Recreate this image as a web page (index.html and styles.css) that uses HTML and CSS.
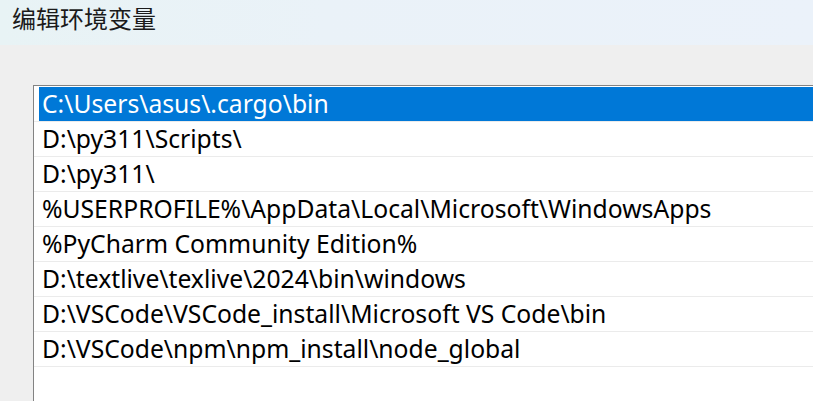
FILE: index.html
```html
<!DOCTYPE html>
<html lang="zh-CN">
<head>
<meta charset="utf-8">
<title>编辑环境变量</title>
<link rel="stylesheet" href="styles.css">
</head>
<body>
<div class="window">
  <header class="titlebar">
    <span class="title">编辑环境变量</span>
  </header>
  <main class="content">
    <div class="listbox">
      <div class="row selected"><span class="label">C:\Users\asus\.cargo\bin</span></div>
      <div class="row"><span class="label">D:\py311\Scripts\</span></div>
      <div class="row"><span class="label">D:\py311\</span></div>
      <div class="row"><span class="label">%USERPROFILE%\AppData\Local\Microsoft\WindowsApps</span></div>
      <div class="row"><span class="label">%PyCharm Community Edition%</span></div>
      <div class="row"><span class="label">D:\textlive\texlive\2024\bin\windows</span></div>
      <div class="row"><span class="label">D:\VSCode\VSCode_install\Microsoft VS Code\bin</span></div>
      <div class="row"><span class="label">D:\VSCode\npm\npm_install\node_global</span></div>
    </div>
  </main>
</div>
</body>
</html>
```
FILE: styles.css
```css
html, body {
  margin: 0;
  padding: 0;
  width: 813px;
  height: 401px;
  overflow: hidden;
  background: #efefef;
}

.window {
  display: flex;
  flex-direction: column;
  height: 401px;
}

.titlebar {
  height: 45px;
  flex: none;
  display: flex;
  align-items: center;
  padding-left: 12px;
  background: linear-gradient(90deg, #e8f3f5 0%, #eaf2f8 40%, #ebf2fa 100%);
}

.title {
  font-family: "Noto Sans CJK SC", "Noto Sans", sans-serif;
  font-size: 24px;
  color: #1b1b1b;
  line-height: 1;
  margin-top: -9px;
}

.content {
  flex: 1;
  padding: 40px 0 0 33px;
  display: flex;
}

.listbox {
  flex: 1;
  background: #ffffff;
  border-left: 1px solid #838383;
  border-top: 1px solid #838383;
  padding-top: 1px;
  font-family: "Noto Sans", "Open Sans", sans-serif;
  font-size: 24.7px;
  color: #000;
}

.row {
  height: 34px;
  border-bottom: 1px solid #ebebeb;
  display: flex;
}

.label {
  flex: 1;
  margin-left: 5px;
  padding-left: 3px;
  line-height: 34px;
  white-space: nowrap;
  overflow: hidden;
}

.row.selected .label {
  background: #0078d7;
  color: #ffffff;
}
```
